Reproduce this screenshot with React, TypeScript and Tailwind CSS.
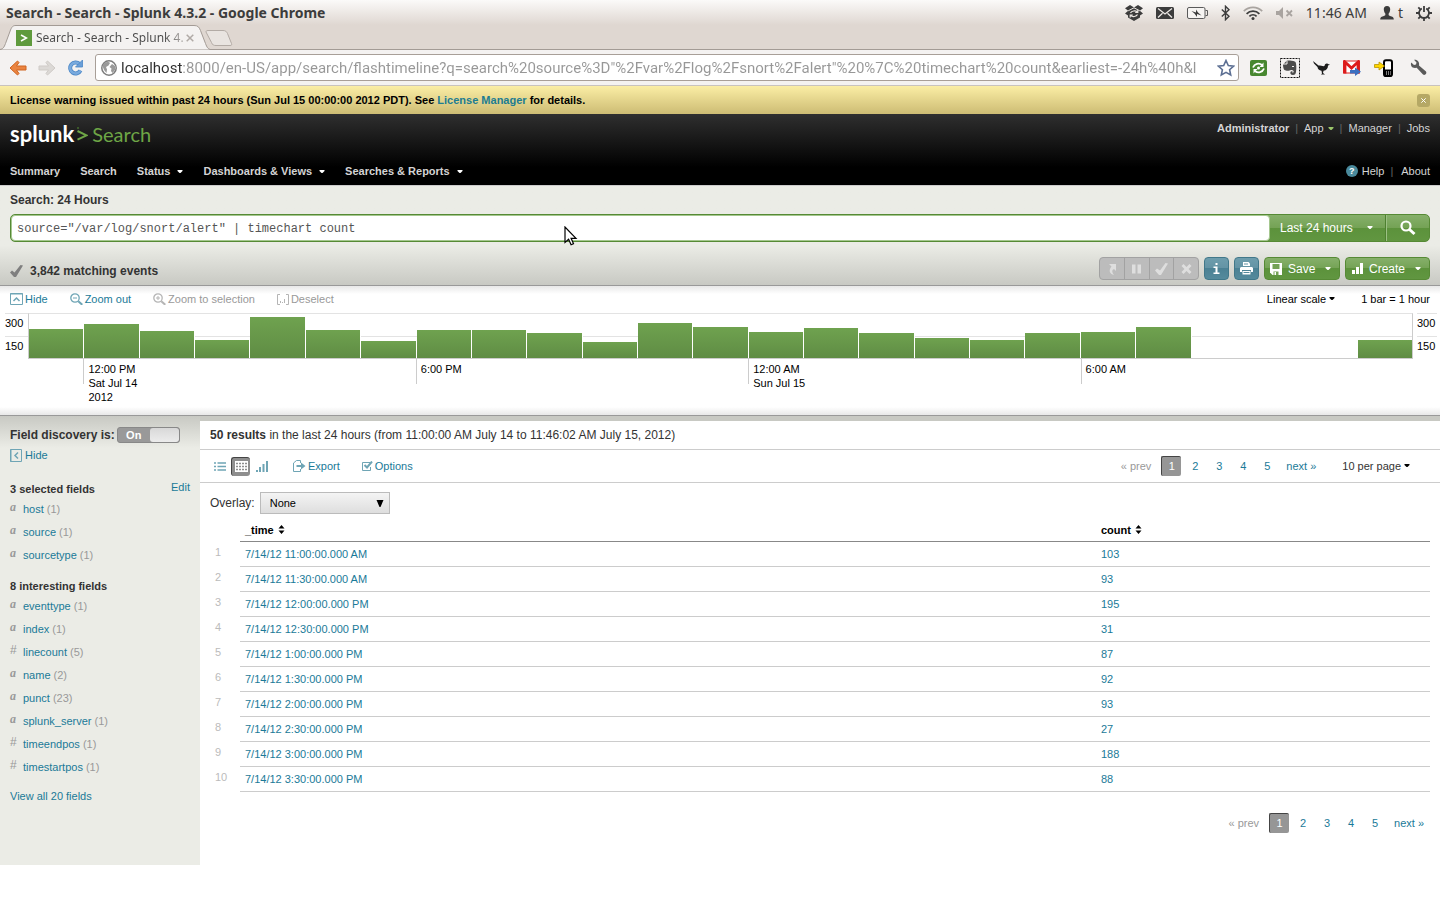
/**
 * App.tsx
 * Splunk search view inside a desktop browser window.
 * Window chrome, license warning, app header, search bar, timeline and results.
 */

import { useState } from "react";
import type { ReactNode } from "react";

const URL_TEXT =
  'localhost:8000/en-US/app/search/flashtimeline?q=search%20source%3D"%2Fvar%2Flog%2Fsnort%2Falert"%20%7C%20timechart%20count&earliest=-24h%40h&l';

// events per hour, oldest first
const HOURLY = [
  193, 227, 180, 120, 273, 187, 113, 187, 187, 167, 107, 233, 207, 173, 200, 167, 133, 120, 167,
  173, 207, 0, 0, 0, 120,
];

const SELECTED_FIELDS = [
  { kind: "a", name: "host", count: 1 },
  { kind: "a", name: "source", count: 1 },
  { kind: "a", name: "sourcetype", count: 1 },
];

const INTERESTING_FIELDS = [
  { kind: "a", name: "eventtype", count: 1 },
  { kind: "a", name: "index", count: 1 },
  { kind: "#", name: "linecount", count: 5 },
  { kind: "a", name: "name", count: 2 },
  { kind: "a", name: "punct", count: 23 },
  { kind: "a", name: "splunk_server", count: 1 },
  { kind: "#", name: "timeendpos", count: 1 },
  { kind: "#", name: "timestartpos", count: 1 },
];

const ROWS = [
  ["7/14/12 11:00:00.000 AM", 103],
  ["7/14/12 11:30:00.000 AM", 93],
  ["7/14/12 12:00:00.000 PM", 195],
  ["7/14/12 12:30:00.000 PM", 31],
  ["7/14/12 1:00:00.000 PM", 87],
  ["7/14/12 1:30:00.000 PM", 92],
  ["7/14/12 2:00:00.000 PM", 93],
  ["7/14/12 2:30:00.000 PM", 27],
  ["7/14/12 3:00:00.000 PM", 188],
  ["7/14/12 3:30:00.000 PM", 88],
] as const;

function Caret({ className = "" }: { className?: string }) {
  return (
    <svg width="6" height="4" viewBox="0 0 6 4" className={`shrink-0 ${className}`} aria-hidden="true">
      <path d="M.5 0h5v1L3.500 3h-1L.5 1z" fill="currentColor" />
    </svg>
  );
}

/* ---------- window chrome ---------- */

function TitleBar() {
  return (
    <div className="flex h-[25px] items-center justify-between bg-linear-to-b from-[#fbfaf9] to-[#dfd7d1] pr-2 pl-1.5 text-[#3c3c3c]">
      <h1 className="text-[14px] leading-5 font-bold whitespace-nowrap">
        Search - Search - Splunk 4.3.2 - Google Chrome
      </h1>
      <div className="flex items-center gap-[13px]">
        <svg width="18" height="16" viewBox="0 0 18 16" aria-hidden="true">
          <path
            d="M5 0 9 2.600 13 0l5 3.300-3.200 2.500L18 8.400l-3 2v2L9 16l-6-3.600v-2l-3-2 3.200-2.600L0 3.300z"
            fill="#3c3c3c"
          />
          <path d="M3.200 5.800 9 2.800l5.800 3" stroke="#ece7e3" strokeWidth="1" fill="none" />
          <path d="M5.500 8a4 3 0 0 1 7-.8M12.500 9.500a4 3 0 0 1-7 .8M12.800 5v2.500h-2.600M5.200 12.500V10h2.600" stroke="#ece7e3" strokeWidth="1.200" fill="none" />
        </svg>
        <svg width="18" height="12" viewBox="0 0 18 12" aria-hidden="true">
          <rect width="18" height="12" rx="1.500" fill="#3c3c3c" />
          <path d="M2 1.500 9 7l7-5.500M2 10.500l4.500-4.300M16 10.500l-4.500-4.300" stroke="#f0ece9" strokeWidth="1.200" fill="none" />
        </svg>
        <svg width="21" height="12" viewBox="0 0 21 12" aria-hidden="true">
          <rect x=".5" y=".5" width="17.500" height="11" rx="1.500" fill="#f6f4f2" stroke="#5a5a5a" />
          <path d="M18.500 3.500h2v5h-2" stroke="#5a5a5a" fill="none" />
          <path d="m4.500 4 4.500 1.500V2.500l2 3 3.500 3L10 7v3L7.500 6.500z" fill="#3c3c3c" />
        </svg>
        <svg width="9" height="16" viewBox="0 0 9 16" aria-hidden="true">
          <path d="M.8 4.500 8 11.200 4.500 14.700V1.300L8 4.800.8 11.500" stroke="#3c3c3c" strokeWidth="1.400" fill="none" />
        </svg>
        <svg width="20" height="14" viewBox="0 0 20 14" fill="none" strokeWidth="1.700" aria-hidden="true">
          <path d="M.8 5.200a13 13 0 0 1 18.400 0" stroke="#a9a4a0" />
          <path d="M3.600 7.800a9 9 0 0 1 12.800 0M6.400 10.300a5.200 5.200 0 0 1 7.200 0" stroke="#3c3c3c" />
          <circle cx="10" cy="12.500" r="1.500" fill="#3c3c3c" />
        </svg>
        <svg width="17" height="12" viewBox="0 0 17 12" aria-hidden="true">
          <path d="M0 4h3l4-4v12L3 8H0z" fill="#a9a4a0" />
          <path d="m10.500 3.500 5.500 5.500m0-5.500L10.500 9" stroke="#a9a4a0" strokeWidth="1.800" />
        </svg>
        <span className="text-[14px] leading-5 whitespace-nowrap">11:46 AM</span>
        <span className="flex items-center gap-1 text-[14px] leading-5">
          <svg width="14" height="14" viewBox="0 0 14 14" aria-hidden="true">
            <path
              d="M7 0c2.200 0 3.400 1.600 3.200 3.800C10 5.800 9.300 6.800 8.600 7.800c0 1.400 0 1.700 1.400 2.200 2.400.8 3.800 1 3.800 3.500H.2c0-2.500 1.400-2.700 3.800-3.500 1.400-.5 1.400-.8 1.400-2.200C4.700 6.800 4 5.800 3.800 3.800 3.600 1.600 4.800 0 7 0z"
              fill="#3c3c3c"
            />
          </svg>
          t
        </span>
        <svg width="16" height="16" viewBox="0 0 16 16" fill="none" stroke="#3c3c3c" strokeWidth="1.800" aria-hidden="true">
          <path d="M5.800 3.500a5 5 0 1 0 4.400 0M8 1v6" />
          <path d="m2.300 2.300 2 2M13.700 2.300l-2 2M0 8h3M13 8h3M2.300 13.700l2-2M13.700 13.700l-2-2M8 13v3" />
        </svg>
      </div>
    </div>
  );
}

function TabStrip() {
  return (
    <div className="flex h-[25px] items-end border-b border-[#a39b95] bg-[#dfd7d1]">
      <div className="relative -mb-px h-[25px] w-[212px]">
        <svg width="236" height="25" viewBox="0 0 236 25" className="absolute top-0 left-0" aria-hidden="true">
          <path
            d="M0 24.500c3-.5 4-2 5.500-6L10.500 5C12 1.500 13 .5 16 .5h178c4 0 5 1.500 6.500 5l5 13c1.500 4 2.500 5.500 5 6"
            fill="#f4f2f1"
            stroke="#a39b95"
          />
          <path
            d="M206 7c0-1 .5-1.500 2-1.500h15c2.500 0 3.500 1 4.500 3l4 10c.5 1.500 0 2-1.500 2h-14c-2.500 0-3.500-.5-4.500-3z"
            fill="#e9e4e0"
            stroke="#b3aba5"
          />
        </svg>
        <div className="relative flex h-full items-center pt-px pl-4 text-[12px] text-[#4a4a4a]">
          <span className="mr-1 flex size-4 shrink-0 items-center justify-center bg-[#5f9a3d]">
            <svg width="8" height="8" viewBox="0 0 8 8" aria-hidden="true">
              <path d="m1 1 5.500 3L1 7" stroke="#fff" strokeWidth="1.500" fill="none" />
            </svg>
          </span>
          <span className="w-[150px] bg-linear-to-r from-[#4a4a4a] from-85% to-[#c4c0bd] bg-clip-text whitespace-nowrap text-transparent">
            Search - Search - Splunk 4.
          </span>
          <button type="button" aria-label="Close tab">
            <svg width="8" height="8" viewBox="0 0 8 8" aria-hidden="true">
              <path d="m.7.700 6.600 6.600m0-6.600L.7 7.300" stroke="#b0aaa6" strokeWidth="1.500" />
            </svg>
          </button>
        </div>
      </div>
    </div>
  );
}

function AddressBar() {
  return (
    <div className="flex items-center gap-[11px] border-b border-[#c9c3be] bg-[#f4f2f1] py-1 pr-3 pl-[9px]">
      <button type="button" aria-label="Back">
        <svg width="18" height="16" viewBox="0 0 18 16" aria-hidden="true">
          <path d="M8.500 1 1 8l7.500 7 1.500-1.500L7.500 10H17V6H7.500L10 2.500z" fill="#ea8440" stroke="#cf6420" strokeLinejoin="round" />
        </svg>
      </button>
      <button type="button" aria-label="Forward">
        <svg width="18" height="16" viewBox="0 0 18 16" aria-hidden="true">
          <path d="M9.500 1 17 8l-7.500 7L8 13.500l2.500-3.500H1V6h9.500L8 2.500z" fill="#dcd9d6" stroke="#cfcbc7" strokeLinejoin="round" />
        </svg>
      </button>
      <button type="button" aria-label="Reload">
        <svg width="17" height="18" viewBox="0 0 17 18" aria-hidden="true">
          <path d="M13.500 11.500a5.500 5.500 0 1 1-1-6.500" stroke="#4a86c6" strokeWidth="4" fill="none" />
          <path d="M13.500 11.500a5.500 5.500 0 1 1-1-6.500" stroke="#79aade" strokeWidth="2.500" fill="none" />
          <path d="M15.500 1v7H8.500z" fill="#6a9fd8" stroke="#4a86c6" strokeWidth=".8" />
        </svg>
      </button>
      <div className="flex h-[27px] min-w-0 flex-1 items-center rounded-[3px] border border-[#a89f98] bg-white pr-[3px] pl-[5px]">
        <svg width="16" height="16" viewBox="0 0 16 16" className="shrink-0" aria-hidden="true">
          <circle cx="8" cy="8" r="7.200" fill="#fff" stroke="#7d7d7d" strokeWidth="1.500" />
          <path d="M3 3.500C5 1.500 8 1.500 9 3L7.500 5.500 5 7l1 2.500L5.500 13 3 10 1.500 6zM11 4l3 2v4l-2.500 3-1.500-2 .500-2.500L8.500 7z" fill="#9a9a9a" />
        </svg>
        <input
          type="text"
          aria-label="Address"
          readOnly
          value={URL_TEXT}
          className="mx-1 min-w-0 flex-1 bg-[linear-gradient(90deg,#2e2e2e_61px,#979797_61px)] bg-clip-text font-['Roboto',sans-serif] text-[15px] leading-6 text-transparent outline-none"
        />
        <svg width="18" height="18" viewBox="0 0 18 18" className="shrink-0" aria-hidden="true">
          <path d="m9 1.500 2.300 5 5.300.6-4 3.600 1.100 5.300L9 13.300 4.300 16l1.100-5.300-4-3.600 5.300-.6z" fill="#fff" stroke="#5c6f93" strokeWidth="1.600" />
        </svg>
      </div>
      <div className="flex items-center gap-[13px]">
        <svg width="17" height="16" viewBox="0 0 17 16" aria-hidden="true">
          <rect width="17" height="16" rx="2" fill="#47872f" />
          <path d="M3 7.500c1.500-4 6-5 9-2.500M14 8.500c-1.500 4-6 5-9 2.500" stroke="#fff" strokeWidth="1.800" fill="none" />
          <path d="M13.500 2.500V7H9.500zM3.500 13.500V9h4z" fill="#fff" />
          <circle cx="8.500" cy="8" r="1.500" fill="#fff" />
        </svg>
        <svg width="20" height="20" viewBox="0 0 20 20" aria-hidden="true">
          <rect x=".5" y=".5" width="19" height="19" fill="none" stroke="#111" strokeDasharray="2 1" />
          <path d="M3 6.500 7 2.500h3c2 .3 5 .5 5.500 1.500 1 2 1 7 .5 10-.3 2-1 3-3 3-2.500 0-3-1.500-2.500-3 .3-1 1.500-1 2-.5v1.500c1-.5 1.500-1 1-2-1-1.500-3.500-1-4-.5-2 .5-4 0-5-.5S3 8.500 3 6.500z" fill="#4b4b4b" />
          <path d="M3 6h4V2.500M12 8.500h2" stroke="#f4f2f1" fill="none" />
        </svg>
        <svg width="17" height="16" viewBox="0 0 17 16" aria-hidden="true">
          <path d="m0 1 5.500 4.500C8 5.500 10 6.500 11.500 6c0-2 2-3 3.500-2l2 .7-2 .8c0 3-1.500 4.800-4.500 5.300L10 13l2 1.500H8l1-1-.5-2.700C6 10.500 4.800 9 4.500 7L1 3.500z" fill="#1c1c1c" />
        </svg>
        <svg width="18" height="16" viewBox="0 0 18 16" aria-hidden="true">
          <rect x=".5" y="1" width="16" height="12" fill="#fff" stroke="#d22" />
          <path d="M2 13.500V2l6.500 6L15 2v11.500" stroke="#dd1b1b" strokeWidth="2.800" fill="none" />
          <path d="M7 10h5V7.500L18 11.800 12 16v-2.500H7z" fill="#3b6fc0" />
        </svg>
        <svg width="19" height="18" viewBox="0 0 19 18" aria-hidden="true">
          <rect x="10" y="1.200" width="8" height="16" rx="2" fill="#fff" stroke="#000" strokeWidth="2" />
          <path d="M10 10.500h8v6.500h-8z" fill="#000" />
          <path d="M12 13h1m1 0h1m1 0h.8M12 15h1m1 0h1m1 0h.8" stroke="#fff" />
          <path d="M.5 5.500H5V3l5.500 4L5 11V8.500H.5z" fill="#ffd600" stroke="#b89400" strokeWidth=".8" />
        </svg>
        <svg width="18" height="17" viewBox="0 0 18 17" className="ml-1" aria-hidden="true">
          <path d="M4 .8 6.500 3.500 6 5.500 4 6 1.200 3.500C.3 6 1.500 9 5 9l1.700-.3 6.300 6.800c1.800 1.300 4.300-.8 3-3L9 6.500C9.700 3 7.500.3 4 .8z" fill="#5a5a5a" />
        </svg>
      </div>
    </div>
  );
}

function LicenseWarning() {
  return (
    <div className="flex h-7 items-center justify-between bg-linear-to-b from-[#fbeea5] to-[#cdbc74] px-2.5 text-[11px] font-bold text-black">
      <p>
        License warning issued within past 24 hours (Sun Jul 15 00:00:00 2012 PDT). See{" "}
        <a href="#license" className="text-[#1c7c92]">
          License Manager
        </a>{" "}
        for details.
      </p>
      <button type="button" aria-label="Dismiss" className="flex size-[13px] items-center justify-center rounded-[3px] bg-[#b5a865]">
        <svg width="5" height="5" viewBox="0 0 5 5" aria-hidden="true">
          <path d="m.3.300 4.400 4.400m0-4.400L.3 4.700" stroke="#fff" />
        </svg>
      </button>
    </div>
  );
}

/* ---------- app header ---------- */

function Bar() {
  return <span className="text-[#666]">|</span>;
}

function AppHeader() {
  return (
    <header className="bg-[linear-gradient(#2f2f2f,#000_75%)] px-2.5 text-[11px] leading-4 text-[#d4d4d4]">
      <div className="flex items-start justify-between pt-1.5">
        <a href="#home" className="flex items-center font-['Lato'] text-[22px] leading-7">
          <span className="font-bold text-white">splunk</span>
          <svg width="11" height="14" viewBox="0 0 11 14" className="mr-1 ml-[3px]" aria-hidden="true">
            <path d="m.5 4 9 4.300-9 4.300" stroke="#6ea646" strokeWidth="2" fill="none" />
            <circle cx="1" cy="1" r="1" fill="#456b2e" />
          </svg>
          <span className="text-[20px] text-[#6ea646]">Search</span>
        </a>
        <div className="flex items-center gap-1.5">
          <strong>Administrator</strong>
          <Bar />
          <button type="button" className="flex items-center gap-1">
            App <Caret className="mt-0.5 text-[#9cc66b]" />
          </button>
          <Bar />
          <a href="#manager">Manager</a>
          <Bar />
          <a href="#jobs">Jobs</a>
        </div>
      </div>
      <div className="flex items-center justify-between pt-[15px] pb-1.5">
        <nav className="flex gap-5 font-bold">
          <a href="#summary">Summary</a>
          <a href="#search">Search</a>
          {["Status", "Dashboards & Views", "Searches & Reports"].map((label) => (
            <button key={label} type="button" className="flex items-center gap-[7px]">
              {label} <Caret className="mt-0.5 text-white" />
            </button>
          ))}
        </nav>
        <div className="flex items-center gap-1.5">
          <a href="#help" className="flex items-center gap-1">
            <span className="flex size-3 items-center justify-center rounded-full bg-[#4a8a9c] text-[9px] font-bold text-white">?</span>
            Help
          </a>
          <Bar />
          <a href="#about" className="ml-0.5">About</a>
        </div>
      </div>
    </header>
  );
}

/* ---------- search bar ---------- */

const GREEN = "bg-[linear-gradient(#86b06a,#74a255_50%,#5c923b_50%,#619641)]";
const TEAL = "bg-[linear-gradient(#6d9dad,#6393a4_50%,#4b8194_50%,#558a9c)]";

function JobButtons() {
  const icons = [
    { label: "Send to background", d: "M4 1h7v7L9 6C7 7 6.500 8.500 9 12 5 11 3 8 6.500 3.500z" },
    { label: "Pause", d: "M2 1.500h3.500v9H2zM7.500 1.500H11v9H7.500z" },
    { label: "Finalize", d: "M0 7.500 2 5.500l3 2L10.500 0 13 .500 6 12H4z" },
    { label: "Cancel", d: "M1.500 3 3.500 1l3 3 3-3 2 2-3 3 3 3-2 2-3-3-3 3-2-2 3-3z" },
  ];
  return (
    <div className="flex h-[23px] w-[100px] divide-x divide-[#a2a2a2] overflow-hidden rounded-[4px] border border-[#a2a2a2] bg-[#bcbcbc]">
      {icons.map((icon) => (
        <button key={icon.label} type="button" disabled aria-label={icon.label} className="flex flex-1 items-center justify-center">
          <svg width="13" height="12" viewBox="0 0 13 12" aria-hidden="true">
            <path d={icon.d} fill="#dedede" />
          </svg>
        </button>
      ))}
    </div>
  );
}

function SearchPanel() {
  const [query, setQuery] = useState('source="/var/log/snort/alert" | timechart count');

  return (
    <section className="border-t border-b border-t-[#ccc] border-b-[#999] bg-linear-to-b from-[#ebece6] from-60% to-[#c8c9c3] px-2.5 pt-1.5 pb-[5px]">
      <h2 className="text-[12px] leading-4 font-bold text-[#333]">Search: 24 Hours</h2>
      <form className={`mt-1.5 flex h-7 overflow-hidden rounded-[5px] border border-[#568a35] ${GREEN}`} onSubmit={(e) => e.preventDefault()}>
        <input
          type="text"
          aria-label="Search"
          value={query}
          onChange={(e) => setQuery(e.target.value)}
          spellCheck={false}
          className="min-w-0 flex-1 rounded-[4px] border border-[#a5c78f] bg-white pt-0.5 pl-[5px] font-['Liberation_Mono',monospace] text-[12px] text-[#555] outline-none"
        />
        <button type="button" className="flex w-[116px] items-center justify-between border-r border-[#4e8030] pr-3 pl-2.5 text-[12px] text-white">
          Last 24 hours <Caret />
        </button>
        <button type="submit" aria-label="Run search" className="flex w-[43px] items-center justify-center border-l border-[#9cc184]">
          <svg width="16" height="16" viewBox="0 0 16 16" aria-hidden="true">
            <circle cx="6" cy="6" r="4.500" stroke="#fff" strokeWidth="2.200" fill="none" />
            <path d="m9.500 9.500 5 4.500" stroke="#fff" strokeWidth="3" />
          </svg>
        </button>
      </form>
      <div className="mt-[15px] flex items-center justify-between">
        <div className="flex items-center gap-[7px] pt-1 text-[12px] leading-4 font-bold text-[#333]">
          <svg width="13" height="12" viewBox="0 0 13 12" aria-hidden="true">
            <path d="M0 7.500 2 5.500l2.500 2L10.500 0 13 .500 6 12H4z" fill="#7f7f7f" />
          </svg>
          3,842 matching events
        </div>
        <div className="flex gap-[5px] text-[12px] text-white">
          <JobButtons />
          <button type="button" aria-label="Inspect job" className={`flex h-[23px] w-[25px] items-center justify-center rounded-[4px] border border-[#41788a] ${TEAL}`}>
            <svg width="7" height="11" viewBox="0 0 7 11" fill="#fff" aria-hidden="true">
              <path d="M2.500 0h2v2h-2zM.5 3.500h4V9.500H6.500V11H.5V9.500h2V5h-2z" />
            </svg>
          </button>
          <button type="button" aria-label="Print" className={`flex h-[23px] w-[25px] items-center justify-center rounded-[4px] border border-[#41788a] ${TEAL}`}>
            <svg width="13" height="13" viewBox="0 0 13 13" aria-hidden="true">
              <path d="M3.500 0h5l1.500 1.500V4h-7V0z" fill="#fff" />
              <path d="M4 2h4" stroke="#6393a4" />
              <path d="M1 5h11l1 1v4h-2V8H2v2H0V6z" fill="#fff" />
              <path d="M2.500 9h8v3.500h-8z" fill="#fff" />
              <path d="M3.500 10.500h6" stroke="#558a9c" />
            </svg>
          </button>
          <button type="button" className={`flex h-[23px] w-[76px] items-center rounded-[4px] border border-[#568a35] pr-2 pl-[5px] ${GREEN}`}>
            <svg width="12" height="12" viewBox="0 0 12 12" aria-hidden="true">
              <path d="M0 0h12v12H2.500L0 9.500z" fill="#fff" />
              <path d="M2.500 1h7v5h-7zM3.500 8.500h5V12h-5z" fill="#74a255" />
              <path d="M4.500 9h1.500v3H4.500z" fill="#fff" />
            </svg>
            <span className="mr-auto ml-1.5">Save</span>
            <Caret />
          </button>
          <button type="button" className={`flex h-[23px] w-[85px] items-center rounded-[4px] border border-[#568a35] pr-2 pl-1.5 ${GREEN}`}>
            <svg width="11" height="11" viewBox="0 0 11 11" fill="#fff" aria-hidden="true">
              <path d="M0 7h3v4H0zM4 4h3v7H4zM8 0h3v11H8z" />
            </svg>
            <span className="mr-auto ml-1.5">Create</span>
            <Caret />
          </button>
        </div>
      </div>
    </section>
  );
}

/* ---------- timeline ---------- */

function IconLink({ icon, disabled, children }: { icon: ReactNode; disabled?: boolean; children: ReactNode }) {
  return (
    <button
      type="button"
      disabled={disabled}
      className={`flex items-center gap-0.5 whitespace-nowrap ${disabled ? "text-[#999]" : "text-[#1a7a98]"}`}
    >
      {icon}
      {children}
    </button>
  );
}

function Magnifier({ sign, color }: { sign: string; color: string }) {
  return (
    <svg width="13" height="12" viewBox="0 0 13 12" fill="none" stroke={color} aria-hidden="true">
      <circle cx="5" cy="5" r="4.200" strokeWidth="1.300" />
      <path d="m8.300 8.300 4 3.500" strokeWidth="2" />
      <path d={sign} />
    </svg>
  );
}

function AxisLabels({ align }: { align: string }) {
  return (
    <div className={`w-6 leading-[19px] ${align}`}>
      <div className="h-[23px] border-t border-[#e3e3e3]">300</div>
      <div className="h-[23px] border-t border-[#e3e3e3]">150</div>
    </div>
  );
}

function Timeline() {
  const ticks = [
    { start: "col-start-2", lines: ["12:00 PM", "Sat Jul 14", "2012"] },
    { start: "col-start-8", lines: ["6:00 PM"] },
    { start: "col-start-14", lines: ["12:00 AM", "Sun Jul 15"] },
    { start: "col-start-20", lines: ["6:00 AM"] },
  ];

  return (
    <section className="border-b border-[#999] bg-[linear-gradient(#e8e8e8,#fff_8px,#fff_calc(100%-8px),#e8e8e8)] pt-[5px] pb-[11px] text-[11px] text-black">
      <div className="flex items-center justify-between px-2.5 leading-4">
        <div className="flex gap-[22px]">
          <IconLink
            icon={
              <svg width="13" height="12" viewBox="0 0 13 12" fill="none" stroke="#6fa5b5" aria-hidden="true">
                <path d="M.5.500h12v11H.5zM0 1h13" />
                <path d="m3.500 8 3-3 3 3" strokeWidth="1.500" />
              </svg>
            }
          >
            Hide
          </IconLink>
          <IconLink icon={<Magnifier sign="M3 5h4" color="#6fa5b5" />}>Zoom out</IconLink>
          <IconLink disabled icon={<Magnifier sign="M3 5h4M5 3v4" color="#b5b5b5" />}>
            Zoom to selection
          </IconLink>
          <IconLink
            disabled
            icon={
              <svg width="12" height="11" viewBox="0 0 12 11" fill="none" stroke="#b5b5b5" aria-hidden="true">
                <path d="M3 .5H.5v10H3M9 .5h2.500v10H9M3.500 7v2M5.500 8v1M7.500 5v4" />
              </svg>
            }
          >
            Deselect
          </IconLink>
        </div>
        <div className="flex gap-[26px]">
          <button type="button" className="flex items-center gap-[3px]">
            Linear scale <Caret />
          </button>
          <span>1 bar = 1 hour</span>
        </div>
      </div>

      <div className="mr-[3px] ml-1 mt-1.5 flex">
        <AxisLabels align="pl-px" />
        <div className="min-w-0 flex-1">
          <div className="relative flex h-[46px] items-end border border-[#ccc] border-t-[#e3e3e3]">
            <div className="absolute inset-x-0 top-[22px] border-t border-[#e3e3e3]" />
            {HOURLY.map((count, hour) => (
              <div
                key={hour}
                className="relative min-w-0 flex-1 border-r border-white bg-linear-to-b from-[#6fa24f] to-[#5f8c44] last:border-r-0"
                style={{ height: Math.round(count * 0.15), visibility: count ? "visible" : "hidden" }}
              />
            ))}
          </div>
          <div className="grid grid-cols-[repeat(25,minmax(0,1fr))] leading-[14px]">
            {ticks.map((tick) => (
              <div key={tick.lines[0]} className={`col-span-6 row-start-1 flex items-start ${tick.start}`}>
                <span className="h-[25px] border-l border-[#ccc]" />
                <div className="pt-[3px] pl-1">
                  {tick.lines.map((line) => (
                    <div key={line}>{line}</div>
                  ))}
                </div>
              </div>
            ))}
          </div>
        </div>
        <AxisLabels align="pl-1" />
      </div>
    </section>
  );
}

/* ---------- fields ---------- */

interface Field {
  kind: string;
  name: string;
  count: number;
}

function FieldList({ fields }: { fields: Field[] }) {
  return (
    <ul className="pb-0.5">
      {fields.map((field) => (
        <li key={field.name} className="flex h-[23px] items-center text-[#999]">
          <span
            className={
              field.kind === "a"
                ? "w-[13px] pb-1 font-['Liberation_Serif',serif] text-[12px] font-bold italic"
                : "w-[13px] pb-1 text-[12px]"
            }
          >
            {field.kind}
          </span>
          <a href={`#${field.name}`} className="mr-[3px] text-[#1a7a98]">
            {field.name}
          </a>
          ({field.count})
        </li>
      ))}
    </ul>
  );
}

function FieldsSidebar() {
  const [discovery, setDiscovery] = useState(true);

  return (
    <aside className="w-[200px] shrink-0 bg-[linear-gradient(#c8c9c3,#ebece6_32px)] px-2.5 pt-2.5 pb-[61px] text-[11px] leading-4">
      <div className="flex h-[17px] items-center gap-0.5 text-[12px] font-bold text-[#333]">
        <span id="discovery" className="whitespace-nowrap">Field discovery is:</span>
        <button
          type="button"
          role="switch"
          aria-checked={discovery}
          aria-labelledby="discovery"
          onClick={() => setDiscovery(!discovery)}
          className="flex h-4 w-[63px] overflow-hidden rounded-[3px] border border-[#888] bg-[#999] text-[11px] leading-[14px] text-white"
        >
          <span className="w-8 text-center">On</span>
          <span className="h-full flex-1 rounded-[3px] bg-linear-to-b from-[#d8d8d8] to-[#ececec]" />
        </button>
      </div>
      <div className="mt-1">
        <IconLink
          icon={
            <svg width="13" height="13" viewBox="0 0 13 13" fill="none" stroke="#6fa5b5" aria-hidden="true">
              <path d="M.5.500h11v12H.5zM1 0v13" />
              <path d="m8 3.500-3 3 3 3" strokeWidth="1.500" />
            </svg>
          }
        >
          Hide
        </IconLink>
      </div>
      <div className="mt-[18px] flex justify-between">
        <h3 className="font-bold text-[#333]">3 selected fields</h3>
        <a href="#edit" className="-mt-0.5 text-[#1a7a98]">Edit</a>
      </div>
      <FieldList fields={SELECTED_FIELDS} />
      <h3 className="mt-2.5 font-bold text-[#333]">8 interesting fields</h3>
      <FieldList fields={INTERESTING_FIELDS} />
      <a href="#fields" className="mt-2 block text-[#1a7a98]">View all 20 fields</a>
    </aside>
  );
}

/* ---------- results ---------- */

function Pager() {
  return (
    <nav aria-label="Pages" className="flex items-center text-[11px] leading-5 text-[#1a7a98]">
      <span className="mr-2.5 text-[#999]">« prev</span>
      <div className="flex gap-1 text-center">
        <span aria-current="page" className="w-5 rounded-[2px] border-t border-l border-[#444] bg-[#969696] leading-[19px] text-white">
          1
        </span>
        {[2, 3, 4, 5].map((page) => (
          <a key={page} href={`#page-${page}`} className="w-5">
            {page}
          </a>
        ))}
      </div>
      <a href="#next" className="ml-[9px]">next »</a>
    </nav>
  );
}

function SortHeader({ label }: { label: string }) {
  return (
    <button type="button" className="flex items-center gap-1">
      {label}
      <svg width="7" height="9" viewBox="0 0 7 9" className="-mt-0.5" aria-hidden="true">
        <path d="M3.500 0 6.500 3.500h-6zM3.500 9l3-3.500h-6z" fill="#000" />
      </svg>
    </button>
  );
}

function ResultsToolbar() {
  return (
    <div className="flex h-[33px] items-center border-b border-[#ccc] pr-[30px] pl-3.5 text-[11px]">
      <button type="button" aria-label="Events list">
        <svg width="12" height="9" viewBox="0 0 12 9" stroke="#6fa5b5" strokeWidth="1.500" aria-hidden="true">
          <path d="M0 1h2M0 4.500h2M0 8h2M3.500 1H12M3.500 4.500H12M3.500 8H12" />
        </svg>
      </button>
      <button
        type="button"
        aria-label="Results table"
        className="mr-1.5 ml-[5px] flex size-[19px] items-center justify-center rounded-[3px] border-t border-l border-[#444] bg-[#8e8e8e]"
      >
        <svg width="13" height="11" viewBox="0 0 13 11" aria-hidden="true">
          <rect width="13" height="11" fill="#fff" />
          <path d="M1 2.500h11M1 5.500h11M1 8.500h11" stroke="#8e8e8e" strokeWidth="1.600" strokeDasharray="2 1" />
        </svg>
      </button>
      <button type="button" aria-label="Results chart">
        <svg width="12" height="11" viewBox="0 0 12 11" stroke="#6fa5b5" strokeWidth="2" aria-hidden="true">
          <path d="M1 9v2M4 6v5M7.500 3v8M11 0v11" />
        </svg>
      </button>
      <div className="ml-[25px] flex gap-[22px]">
        <IconLink
          icon={
            <svg width="13" height="12" viewBox="0 0 13 12" aria-hidden="true">
              <path d="M7.500 3V.5h-4L.5 3v8.500h7V9" stroke="#6fa5b5" fill="none" />
              <path d="M3.500 5H8V2.500L12.500 6 8 9.500V7H3.500z" fill="#6fa5b5" />
            </svg>
          }
        >
          Export
        </IconLink>
        <IconLink
          icon={
            <svg width="11" height="10" viewBox="0 0 11 10" fill="none" stroke="#6fa5b5" aria-hidden="true">
              <path d="M8 1.500H.5v8h8V6" />
              <path d="m2.500 4 2.500 2.500L10 .5" strokeWidth="2" />
            </svg>
          }
        >
          Options
        </IconLink>
      </div>
      <div className="ml-auto flex items-center gap-[26px]">
        <Pager />
        <button type="button" className="flex items-center gap-[3px] text-[#333]">
          10 per page <Caret className="text-black" />
        </button>
      </div>
    </div>
  );
}

function Results() {
  return (
    <main className="mt-[5px] min-w-0 flex-1 rounded-tl-[5px] bg-white">
      <p className="border-b border-[#ccc] px-2.5 text-[12px] leading-7 text-[#333]">
        <strong>50 results</strong> in the last 24 hours (from 11:00:00 AM July 14 to 11:46:02 AM July 15, 2012)
      </p>
      <ResultsToolbar />
      <div className="mt-[9px] flex items-center px-2.5 text-[12px] text-[#333]">
        <label htmlFor="overlay" className="mr-[5px]">Overlay:</label>
        <div className="relative">
          <select
            id="overlay"
            className="h-[22px] w-[130px] appearance-none border border-[#bbb] bg-linear-to-b from-[#f4f4f4] to-[#dedede] pl-[9px] text-[11px] text-black"
          >
            <option>None</option>
            <option>Heat map</option>
            <option>High/low values</option>
          </select>
          <svg width="8" height="7" viewBox="0 0 8 7" className="pointer-events-none absolute top-2 right-1.5" aria-hidden="true">
            <path d="M.5 0h7L4.500 7h-1z" fill="#000" />
          </svg>
        </div>
      </div>
      <div className="px-2.5">
        <table className="w-full table-fixed border-collapse text-left text-[11px]">
          <colgroup>
            <col className="w-[30px]" />
            <col />
            <col className="w-[334px]" />
          </colgroup>
          <thead>
            <tr className="h-[27px] text-black">
              <td />
              <th className="border-b border-[#888] px-[5px] pt-1.5"><SortHeader label="_time" /></th>
              <th className="border-b border-[#888] px-[5px] pt-1.5"><SortHeader label="count" /></th>
            </tr>
          </thead>
          <tbody>
            {ROWS.map(([time, count], i) => (
              <tr key={time} className="h-[25px] leading-4 text-[#1a7a98]">
                <td className="pb-[3px] pl-[5px] text-[#bbb]">{i + 1}</td>
                <td className="border-b border-[#ccc] px-[5px]"><a href={`#row-${i + 1}`}>{time}</a></td>
                <td className="border-b border-[#ccc] px-[5px]"><a href={`#count-${i + 1}`}>{count}</a></td>
              </tr>
            ))}
          </tbody>
        </table>
      </div>
      <div className="mt-[21px] flex justify-end pr-4">
        <Pager />
      </div>
    </main>
  );
}

function MousePointer() {
  return (
    <svg width="14" height="20" viewBox="0 0 14 20" className="pointer-events-none absolute top-[226px] left-[564px]" aria-hidden="true">
      <path d="M1 1v15.500l3.600-3.300 2.500 5.600 2.400-1.100L7.100 12.300h4.900z" fill="#fff" stroke="#000" strokeWidth="1.200" />
    </svg>
  );
}

export default function App() {
  return (
    <div className="relative min-h-screen bg-white font-['Liberation_Sans',Arial,sans-serif]">
      <div className="font-['Noto_Sans',sans-serif]">
        <TitleBar />
        <TabStrip />
        <AddressBar />
      </div>
      <LicenseWarning />
      <AppHeader />
      <SearchPanel />
      <Timeline />
      <div className="flex bg-[linear-gradient(#c8c9c3_5px,#fff_5px)]">
        <FieldsSidebar />
        <Results />
      </div>
      <MousePointer />
    </div>
  );
}
